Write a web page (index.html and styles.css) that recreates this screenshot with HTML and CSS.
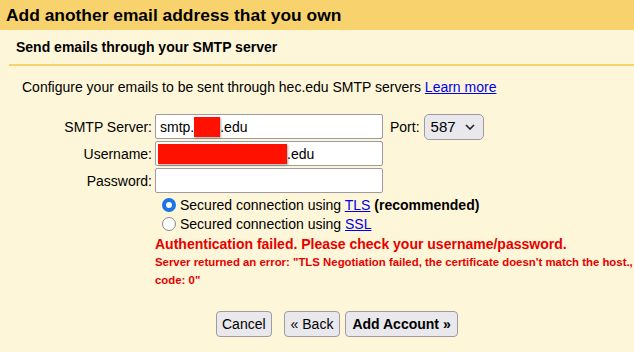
FILE: index.html
```html
<!DOCTYPE html>
<html>
<head>
<meta charset="utf-8">
<link rel="stylesheet" href="styles.css">
</head>
<body>
<div class="header">Add another email address that you own</div>
<div class="sub">Send emails through your SMTP server</div>
<div class="intro">Configure your emails to be sent through hec.edu SMTP servers <a href="#">Learn more</a></div>
<div class="form">
  <div class="row">
    <label class="lbl">SMTP Server:</label>
    <div class="input">smtp.<span class="redact r1"></span>.edu</div>
    <span class="port-lbl">Port:</span>
    <div class="select">587 <svg width="10" height="6" viewBox="0 0 10 6"><path d="M1 1l4 4 4-4" fill="none" stroke="#222" stroke-width="1.6"/></svg></div>
  </div>
  <div class="row">
    <label class="lbl">Username:</label>
    <div class="input"><span class="redact r2"></span>.edu</div>
  </div>
  <div class="row">
    <label class="lbl">Password:</label>
    <div class="input"></div>
  </div>
  <div class="radios">
    <div class="radio-row"><span class="radio on"></span><span>Secured connection using <a href="#">TLS</a> <b>(recommended)</b></span></div>
    <div class="radio-row"><span class="radio"></span><span>Secured connection using <a href="#">SSL</a></span></div>
  </div>
  <div class="err">Authentication failed. Please check your username/password.</div>
  <div class="err-sub">Server returned an error: "TLS Negotiation failed, the certificate doesn't match the host., code: 0"</div>
</div>
<div class="buttons">
  <button class="btn">Cancel</button>
  <button class="btn back">« Back</button>
  <button class="btn bold">Add Account »</button>
</div>
</body>
</html>
```
FILE: styles.css
```css
html, body { margin: 0; padding: 0; }
body {
  background: #fef6d8;
  font-family: "Liberation Sans", Arial, sans-serif;
  font-size: 14px;
  color: #000;
  width: 634px;
  height: 352px;
  overflow: hidden;
}
a { color: #0000ee; text-decoration: underline; }
.header {
  background: #f8d36d;
  height: 30px;
  line-height: 30px;
  padding-left: 6px;
  font-weight: bold;
  font-size: 17.4px;
}
.sub {
  margin-left: 9px;
  padding: 9px 0 0 7px;
  height: 25px;
  border-bottom: 2px solid #f8d36d;
  font-weight: bold;
  font-size: 14px;
}
.intro {
  padding: 13px 0 0 22px;
  height: 34px;
}
.row {
  display: flex;
  align-items: center;
  height: 27px;
}
.lbl {
  width: 152px;
  text-align: right;
  margin-right: 3px;
}
.input {
  box-sizing: border-box;
  width: 228px;
  height: 25px;
  background: #fff;
  border: 1px solid #a09aa0;
  border-radius: 2px;
  padding: 0 4px;
  display: flex;
  align-items: center;
  font-size: 14px;
}
.redact {
  display: inline-block;
  background: #ff1100;
  height: 20px;
  box-shadow: 1px 1px 2px rgba(0,0,0,0.35);
}
.r1 { width: 26px; }
.r2 { width: 129px; margin-left: -2px; }
.port-lbl { margin-left: 7px; margin-right: 4px; }
.select {
  box-sizing: border-box;
  width: 60px;
  height: 26px;
  background: #e9e8ed;
  border: 1px solid #a09aa0;
  border-radius: 5px;
  display: flex;
  align-items: center;
  justify-content: space-between;
  padding: 0 8px 0 6px;
  font-size: 15px;
}
.radios { padding: 1px 0 0 161px; }
.radio-row {
  display: flex;
  align-items: center;
  height: 19px;
}
.radio {
  box-sizing: border-box;
  width: 14px;
  height: 14px;
  border-radius: 50%;
  border: 1px solid #888;
  background: #fff;
  margin-right: 4px;
  margin-left: 1px;
}
.radio.on {
  border: 4px solid #1a73e8;
}
.err {
  padding: 3px 0 0 155px;
  color: #e60000;
  font-weight: bold;
  font-size: 14px;
}
.err-sub {
  padding: 1px 0 0 155px;
  color: #e60000;
  font-weight: bold;
  font-size: 11.4px;
  line-height: 18px;
  width: 482px;
}
.buttons {
  display: flex;
  padding: 22px 0 0 216px;
}
.btn {
  box-sizing: border-box;
  height: 26px;
  background: #e9e8ed;
  border: 1px solid #a09aa0;
  border-radius: 4px;
  font-family: "Liberation Sans", Arial, sans-serif;
  font-size: 14px;
  padding: 0 5px;
  margin-right: 5px;
  color: #000;
}
.btn.back { margin-left: 7px; padding: 0 6px; }
.btn.bold { font-weight: bold; padding: 0 6px; }
```
